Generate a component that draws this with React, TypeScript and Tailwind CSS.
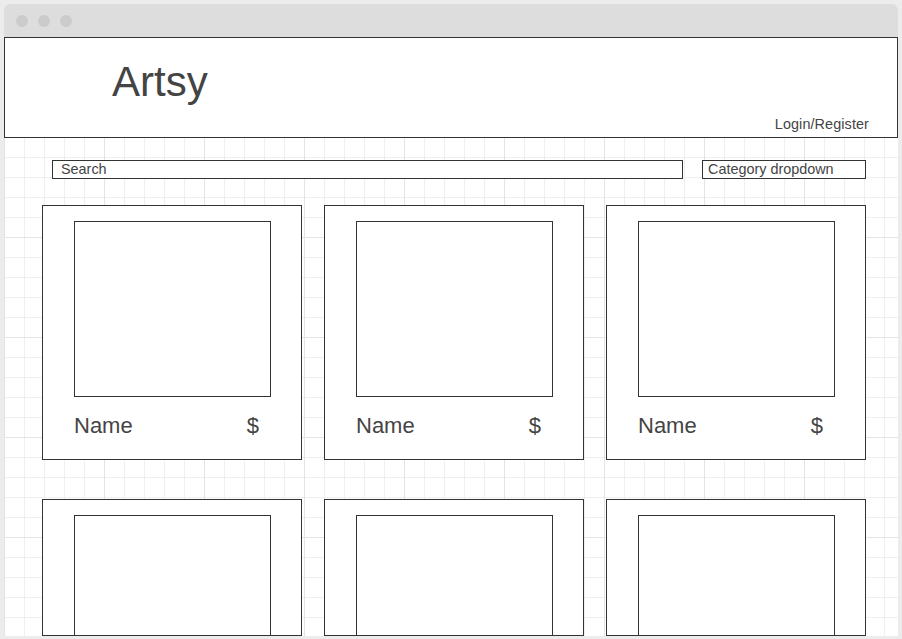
import React from "react";

interface Product {
    name: string;
    price: string;
}

const products: Product[] = [
    { name: "Name", price: "$" },
    { name: "Name", price: "$" },
    { name: "Name", price: "$" },
];

const ProductCard: React.FC<{ product: Product }> = ({ product }) => {
    return (
        <div className="h-[255px] w-[260px] border border-[#333] bg-white pl-[31px] pt-[15px]">
            <div className="h-[176px] w-[197px] border border-[#333] bg-white" />
            <div className="mt-[18px] flex w-[197px] justify-between pr-[12px] text-[22px] leading-none text-[#444]">
                <span>{product.name}</span>
                <span>{product.price}</span>
            </div>
        </div>
    );
};

const PlaceholderCard: React.FC = () => {
    return (
        <div className="h-[137px] w-[260px] border border-[#333] bg-white pl-[31px] pt-[15px]">
            <div className="h-[121px] w-[197px] border border-[#333] bg-white" />
        </div>
    );
};

export default function App() {
    return (
        <div className="h-[639px] w-[902px] overflow-hidden bg-[#ececec] pl-[4px] pt-[4px] font-['Liberation_Sans',Arial,sans-serif]">
            <div className="flex h-[632px] w-[894px] flex-col overflow-hidden rounded-t-[6px] bg-white">
                {/* window chrome */}
                <div className="flex h-[33px] shrink-0 items-center gap-[10px] bg-[#dddddd] pl-[12px]">
                    <span className="h-[12px] w-[12px] rounded-full bg-[#cbcbcb]" />
                    <span className="h-[12px] w-[12px] rounded-full bg-[#cbcbcb]" />
                    <span className="h-[12px] w-[12px] rounded-full bg-[#cbcbcb]" />
                </div>

                <div className="flex-1 bg-white bg-[linear-gradient(to_right,#e4e4e4_1px,transparent_1px),linear-gradient(to_bottom,#e4e4e4_1px,transparent_1px),linear-gradient(to_right,#efefef_1px,transparent_1px),linear-gradient(to_bottom,#efefef_1px,transparent_1px)] bg-[size:100px_100px,100px_100px,20px_20px,20px_20px]">
                    <header className="flex h-[101px] flex-col border border-[#333] bg-white">
                        <h1 className="ml-[107px] mt-[23px] text-[42px] leading-none text-[#444]">
                            Artsy
                        </h1>
                        <p className="mr-[28px] mt-[14px] self-end text-[14.4px] leading-none tracking-[0.1px] text-[#444]">
                            Login/Register
                        </p>
                    </header>

                    <div className="mt-[22px] flex pl-[48px]">
                        <div className="flex h-[19px] w-[631px] items-center border border-[#333] bg-white pl-[8px] text-[14.4px] leading-none text-[#444]">
                            Search
                        </div>
                        <div className="ml-[19px] flex h-[19px] w-[164px] items-center border border-[#333] bg-white pl-[5px] text-[14.4px] leading-none text-[#444]">
                            Category dropdown
                        </div>
                    </div>

                    <div className="mt-[26px] grid grid-cols-[260px_260px_260px] gap-x-[22px] gap-y-[39px] pl-[38px]">
                        {products.map((p, i) => (
                            <ProductCard key={i} product={p} />
                        ))}
                        <PlaceholderCard />
                        <PlaceholderCard />
                        <PlaceholderCard />
                    </div>
                </div>
            </div>
        </div>
    );
}
